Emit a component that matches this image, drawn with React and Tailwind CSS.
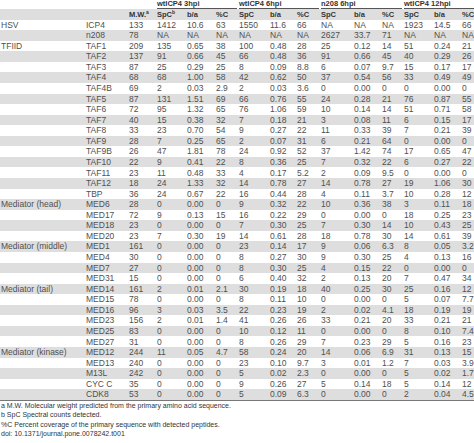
import React from "react";

const groups = ["wtICP4 3hpi", "wtICP4 6hpi", "n208 6hpi", "wtICP4 12hpi"];

const rows = [
  ["HSV", "ICP4", "133", "1412", "10.6", "63", "1550", "11.6", "66", "NA", "NA", "NA", "1923", "14.5", "66"],
  ["", "n208", "78", "NA", "NA", "NA", "NA", "NA", "NA", "2627", "33.7", "71", "NA", "NA", "NA"],
  ["TFIID", "TAF1", "209", "135", "0.65", "38", "100", "0.48", "28", "25", "0.12", "14", "51", "0.24", "21"],
  ["", "TAF2", "137", "91", "0.66", "45", "66", "0.48", "36", "91", "0.66", "45", "40", "0.29", "26"],
  ["", "TAF3", "87", "25", "0.29", "25", "8", "0.09", "8.8", "6", "0.07", "9.7", "15", "0.17", "17"],
  ["", "TAF4", "68", "68", "1.00", "58", "42", "0.62", "50", "37", "0.54", "56", "33", "0.49", "49"],
  ["", "TAF4B", "69", "2", "0.03", "2.9", "2", "0.03", "3.6", "0", "0.00", "0", "0", "0.00", "0"],
  ["", "TAF5", "87", "131", "1.51", "69", "66", "0.76", "55", "24", "0.28", "21", "76", "0.87", "55"],
  ["", "TAF6", "72", "95", "1.32", "65", "76", "1.06", "59", "10", "0.14", "14", "51", "0.71", "58"],
  ["", "TAF7", "40", "15", "0.38", "32", "7", "0.18", "21", "3", "0.08", "11", "6", "0.15", "17"],
  ["", "TAF8", "33", "23", "0.70", "54", "9", "0.27", "22", "11", "0.33", "39", "7", "0.21", "39"],
  ["", "TAF9", "28", "7", "0.25", "65", "2", "0.07", "31", "6", "0.21", "64", "0", "0.00", "0"],
  ["", "TAF9B", "26", "47", "1.81", "78", "24", "0.92", "52", "37", "1.42", "74", "17", "0.65", "47"],
  ["", "TAF10", "22", "9", "0.41", "22", "8", "0.36", "25", "7", "0.32", "22", "6", "0.27", "22"],
  ["", "TAF11", "23", "11", "0.48", "33", "4", "0.17", "5.2", "2", "0.09", "9.5", "0", "0.00", "0"],
  ["", "TAF12", "18", "24", "1.33", "32", "14", "0.78", "27", "14", "0.78", "27", "19", "1.06", "30"],
  ["", "TBP", "36", "24", "0.67", "22", "16", "0.44", "28", "4", "0.11", "3.7", "10", "0.28", "12"],
  ["Mediator (head)", "MED6", "28", "0", "0.00", "0", "9", "0.32", "22", "10", "0.36", "38", "3", "0.11", "18"],
  ["", "MED17", "72", "9", "0.13", "15", "16", "0.22", "29", "0", "0.00", "0", "18", "0.25", "23"],
  ["", "MED18", "23", "0", "0.00", "0", "7", "0.30", "25", "7", "0.30", "14", "10", "0.43", "25"],
  ["", "MED20", "23", "7", "0.30", "19", "14", "0.61", "28", "18", "0.78", "30", "14", "0.61", "39"],
  ["Mediator (middle)", "MED1", "161", "0", "0.00", "0", "23", "0.14", "17", "9", "0.06", "6.3", "8", "0.05", "3.2"],
  ["", "MED4", "30", "0", "0.00", "0", "8", "0.27", "30", "9", "0.30", "25", "4", "0.13", "16"],
  ["", "MED7", "27", "0", "0.00", "0", "8", "0.30", "25", "4", "0.15", "22", "0", "0.00", "0"],
  ["", "MED31", "15", "0", "0.00", "0", "6", "0.40", "32", "2", "0.13", "20", "7", "0.47", "34"],
  ["Mediator (tail)", "MED14", "161", "2", "0.01", "2.1", "30", "0.19", "18", "40", "0.25", "30", "25", "0.16", "12"],
  ["", "MED15", "78", "0", "0.00", "0", "8", "0.11", "10", "0", "0.00", "0", "5", "0.07", "7.7"],
  ["", "MED16", "96", "3", "0.03", "3.5", "22", "0.23", "19", "2", "0.02", "4.1", "18", "0.19", "19"],
  ["", "MED23", "156", "2", "0.01", "1.4", "41", "0.26", "26", "33", "0.21", "20", "33", "0.21", "21"],
  ["", "MED25", "83", "0", "0.00", "0", "10", "0.12", "11", "0", "0.00", "0", "8", "0.10", "7.4"],
  ["", "MED27", "31", "0", "0.00", "0", "8", "0.26", "29", "7", "0.23", "29", "5", "0.16", "23"],
  ["Mediator (kinase)", "MED12", "244", "11", "0.05", "4.7", "58", "0.24", "20", "14", "0.06", "6.9", "31", "0.13", "15"],
  ["", "MED13", "240", "0", "0.00", "0", "23", "0.10", "9.7", "3", "0.01", "1.2", "7", "0.03", "3.9"],
  ["", "M13L", "242", "0", "0.00", "0", "5", "0.02", "2.3", "0", "0.00", "0", "5", "0.02", "1.7"],
  ["", "CYC C", "35", "0", "0.00", "0", "9", "0.26", "27", "5", "0.14", "18", "5", "0.14", "12"],
  ["", "CDK8", "53", "0", "0.00", "0", "5", "0.09", "6.3", "0", "0.00", "0", "2", "0.04", "4.5"],
];

const grid =
  "grid grid-cols-[85px_43px_28px_30px_29px_23px_31px_27px_24px_33px_28px_22px_30px_28px_40px] pl-[1px]";

export default function App() {
  return (
    <div
      className="w-[474px] h-[443px] overflow-hidden bg-white text-[#505050] text-[8.5px] leading-none"
      style={{ fontFamily: '"Liberation Sans", Arial, sans-serif' }}
    >
      <div className="w-[520px]">
        {/* group heads */}
        <div className={grid + " h-[9px] font-bold text-[#333] text-[7.5px]"}>
          <div className="col-span-3"></div>
          {groups.map((g) => (
            <div key={g} className="col-span-3 flex items-center border-b border-[#555] mr-[2px]">
              {g}
            </div>
          ))}
        </div>
        {/* column heads */}
        <div className={grid + " h-[10.6px] bg-[#dedede] font-bold text-[#333] text-[7.5px] items-center"}>
          <div></div>
          <div></div>
          <div>
            M.W.<sup className="text-[5px]">a</sup>
          </div>
          <div>
            SpC<sup className="text-[5px]">b</sup>
          </div>
          <div>b/a</div>
          <div>%C</div>
          {[0, 1, 2].map((i) => (
            <React.Fragment key={i}>
              <div>SpC</div>
              <div>b/a</div>
              <div>%C</div>
            </React.Fragment>
          ))}
        </div>
        {rows.map((r, i) => (
          <div
            key={i}
            className={grid + " h-[10.57px] items-center " + (i % 2 === 1 ? "bg-[#dedede]" : "")}
          >
            {r.map((c, j) => (
              <div key={j} className="whitespace-nowrap">
                {c}
              </div>
            ))}
          </div>
        ))}
        <div className="border-t border-[#777]"></div>
      </div>
      <div className="pl-[1px] text-[#333] text-[7px] leading-[9.4px]">
        <p>a M.W. Molecular weight predicted from the primary amino acid sequence.</p>
        <p>b SpC Spectral counts detected.</p>
        <p>%C Percent coverage of the primary sequence with detected peptides.</p>
        <p>doi: 10.1371/journal.pone.0078242.t001</p>
      </div>
    </div>
  );
}
